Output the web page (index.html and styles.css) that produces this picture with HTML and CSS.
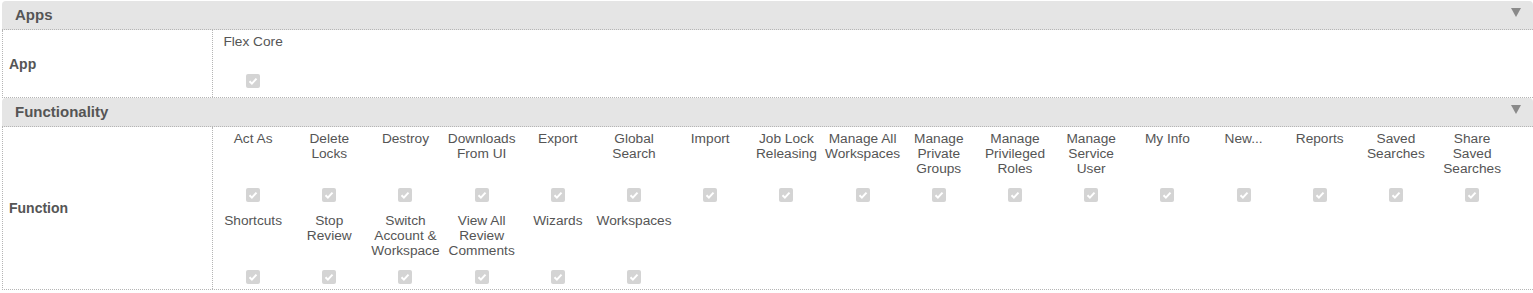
FILE: index.html
```html
<!DOCTYPE html>
<html lang="en">
<head>
  <meta charset="UTF-8" />
  <meta name="viewport" content="width=device-width, initial-scale=1.0"/>
  <title>Permissions</title>
  <link rel="stylesheet" href="styles.css">
</head>
<body>
  <div class="panel">
    <div class="section-head">
      <span>Apps</span>
      <span class="toggle"></span>
    </div>
    <div class="perm-row">
      <div class="perm-label">App</div>
      <div class="perm-items">
        <div class="perm-item"><div class="perm-name">Flex Core</div><span class="check"><svg viewBox="0 0 14 14"><path d="M3.5 7.2l2.4 2.4 4.6-5"/></svg></span></div>
      </div>
    </div>

    <div class="section-head">
      <span>Functionality</span>
      <span class="toggle"></span>
    </div>
    <div class="perm-row">
      <div class="perm-label">Function</div>
      <div class="perm-items" id="functions"></div>
    </div>
  </div>

  <script>
    const functions = [
      'Act As', 'Delete Locks', 'Destroy', 'Downloads From UI', 'Export',
      'Global Search', 'Import', 'Job Lock Releasing', 'Manage All Workspaces',
      'Manage Private Groups', 'Manage Privileged Roles', 'Manage Service User',
      'My Info', 'New...', 'Reports', 'Saved Searches', 'Share Saved Searches',
      'Shortcuts', 'Stop Review', 'Switch Account & Workspace',
      'View All Review Comments', 'Wizards', 'Workspaces'
    ];
    const list = document.getElementById('functions');
    const tick = '<span class="check"><svg viewBox="0 0 14 14"><path d="M3.5 7.2l2.4 2.4 4.6-5"/></svg></span>';

    functions.forEach(name => {
      const item = document.createElement('div');
      item.className = 'perm-item';
      const label = document.createElement('div');
      label.className = 'perm-name';
      label.textContent = name;
      item.appendChild(label);
      item.insertAdjacentHTML('beforeend', tick);
      list.appendChild(item);
    });
  </script>
</body>
</html>
```

FILE: styles.css
```css
* {
  box-sizing: border-box;
}
body {
  margin: 0;
  background: #fff;
  font-family: "Liberation Sans", Arial, sans-serif;
  color: #555;
  overflow: hidden;
}
.panel {
  margin: 1px 0 0 2px;
  width: calc(100% - 2px);
}
.section-head {
  display: flex;
  justify-content: space-between;
  align-items: flex-start;
  height: 29px;
  padding: 0 12px 0 13px;
  background: #e5e5e5;
  border-bottom: 1px dotted #b5b5b5;
  border-radius: 4px 4px 0 0;
  font-size: 15px;
  font-weight: bold;
  line-height: 28px;
}
.toggle {
  margin-top: 7px;
  width: 0;
  height: 0;
  border-left: 5px solid transparent;
  border-right: 5px solid transparent;
  border-top: 9px solid #8a8a8a;
}
.perm-row {
  display: flex;
  min-height: 68px;
  border-left: 1px dotted #b5b5b5;
  border-bottom: 1px dotted #b5b5b5;
}
.perm-label {
  display: flex;
  align-items: center;
  flex: 0 0 210px;
  padding-left: 6px;
  border-right: 1px dotted #b5b5b5;
  font-size: 14px;
  font-weight: bold;
}
.perm-items {
  flex: 1;
  display: flex;
  flex-wrap: wrap;
  align-content: flex-start;
  row-gap: 2px;
  padding-left: 2px;
}
.perm-item {
  width: 76.2px;
  padding: 4px 3px 5px;
  display: flex;
  flex-direction: column;
  align-items: center;
  text-align: center;
}
.perm-name {
  min-height: 28px;
  margin-bottom: 12px;
  font-size: 13.7px;
  line-height: 15px;
}
.check {
  margin-top: auto;
  width: 14px;
  height: 14px;
  border-radius: 2px;
  background: #d4d4d4;
}
.check svg {
  display: block;
  width: 14px;
  height: 14px;
  fill: none;
  stroke: #fff;
  stroke-width: 2;
}
```
